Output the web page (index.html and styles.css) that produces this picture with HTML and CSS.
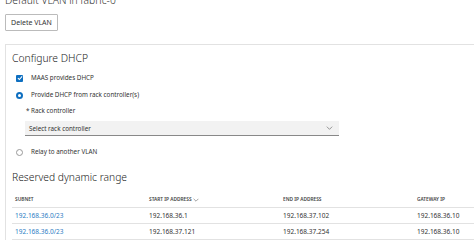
FILE: index.html
```html
<!DOCTYPE html>
<html lang="en">
<head>
  <meta charset="UTF-8">
  <title>Default VLAN in fabric-0</title>
  <link rel="stylesheet" href="styles.css">
</head>
<body>
  <div class="page">
    <h1 class="page-title">Default VLAN in fabric-0</h1>
    <button class="btn" type="button">Delete VLAN</button>

    <div class="card">
      <h2>Configure DHCP</h2>

      <label class="check-row">
        <span class="checkbox checked">
          <svg viewBox="0 0 8 8" width="6" height="6"><path d="M1.2 4.1 L3.2 6 L6.8 1.8" fill="none" stroke="#fff" stroke-width="1.4"/></svg>
        </span>
        MAAS provides DHCP
      </label>

      <label class="check-row">
        <span class="radio selected"></span>
        Provide DHCP from rack controller(s)
      </label>

      <div class="field">
        <div class="field-label">* Rack controller</div>
        <div class="select">
          <span>Select rack controller</span>
          <svg viewBox="0 0 10 6" width="7" height="4"><path d="M1 1 L5 5 L9 1" fill="none" stroke="#666" stroke-width="1"/></svg>
        </div>
      </div>

      <label class="check-row">
        <span class="radio"></span>
        Relay to another VLAN
      </label>

      <h2 class="range-title">Reserved dynamic range</h2>

      <table class="range-table">
        <thead>
          <tr>
            <th>Subnet</th>
            <th>Start IP address <svg viewBox="0 0 10 6" width="6" height="4"><path d="M1 1 L5 5 L9 1" fill="none" stroke="#666" stroke-width="1"/></svg></th>
            <th>End IP address</th>
            <th>Gateway IP</th>
          </tr>
        </thead>
        <tbody>
          <tr>
            <td><a href="#">192.168.36.0/23</a></td>
            <td>192.168.36.1</td>
            <td>192.168.37.102</td>
            <td>192.168.36.10</td>
          </tr>
          <tr>
            <td><a href="#">192.168.36.0/23</a></td>
            <td>192.168.37.121</td>
            <td>192.168.37.254</td>
            <td>192.168.36.10</td>
          </tr>
        </tbody>
      </table>
    </div>
  </div>
</body>
</html>
```

FILE: styles.css
```css
:root {
  --blue: #0e6fc0;
  --link: #2b7dc4;
  --text: #222;
  --line: #e2e2e2;
}
html {
  font-family: "Noto Sans", "Open Sans", sans-serif;
}
body {
  margin: 0;
  background: #fff;
  color: var(--text);
  overflow: hidden;
}
.page {
  padding: 0 0 0 5px;
  margin-top: -7px;
}
.page-title {
  margin: 0;
  font-size: 10.3px;
  font-weight: 300;
  line-height: 14px;
  color: #333;
}
.btn {
  display: block;
  margin-top: 7px;
  height: 17px;
  width: 53px;
  padding: 0;
  background: #fff;
  border: 1px solid #bbb;
  border-radius: 1px;
  font-family: inherit;
  font-size: 7px;
  color: #333;
}
.card {
  margin-top: 13px;
  border-top: 1px solid var(--line);
  border-left: 1px solid var(--line);
  padding: 6px 0 0 6px;
  width: 600px;
}
h2 {
  margin: 0;
  font-size: 10.3px;
  font-weight: 300;
  line-height: 14px;
  color: #222;
}
.check-row {
  display: flex;
  align-items: center;
  gap: 8px;
  font-size: 6.3px;
  line-height: 10px;
  color: #333;
}
.card h2 + .check-row { margin-top: 8px; }
.check-row + .check-row { margin-top: 7px; }
.checkbox {
  width: 7px; height: 7px;
  margin-left: 4px;
  border-radius: 1px;
  background: var(--blue);
  display: flex;
  align-items: center;
  justify-content: center;
}
.radio {
  width: 7px; height: 7px;
  margin-left: 4px;
  border-radius: 50%;
  box-sizing: border-box;
  border: 1px solid #999;
  background: #fff;
}
.radio.selected {
  border: 2.2px solid var(--blue);
}
.field {
  margin: 6px 0 0 13px;
  width: 314px;
}
.field-label {
  font-size: 6.3px;
  line-height: 10px;
  color: #333;
  padding-left: 1px;
}
.select {
  margin-top: 5px;
  height: 14px;
  background: #f2f2f2;
  border-bottom: 1px solid #888;
  display: flex;
  align-items: center;
  justify-content: space-between;
  padding: 0 6px 0 4px;
  font-size: 6.3px;
  color: #333;
}
.field + .check-row { margin-top: 11px; }
.range-title { margin-top: 13px; }
.range-table {
  margin-top: 10px;
  border-collapse: collapse;
  width: 536px;
  table-layout: fixed;
}
.range-table th {
  text-align: left;
  font-size: 4.8px;
  font-weight: 600;
  text-transform: uppercase;
  color: #444;
  padding: 0 0 3px 3px;
  height: 10px;
  line-height: 8px;
  border-bottom: 1px solid var(--line);
}
.range-table th svg { vertical-align: middle; }
.range-table td {
  font-size: 6.5px;
  line-height: 10px;
  padding: 0 0 0 3px;
  height: 15px;
  border-bottom: 1px solid var(--line);
  color: #333;
}
.range-table a {
  color: var(--link);
  text-decoration: none;
}
```
